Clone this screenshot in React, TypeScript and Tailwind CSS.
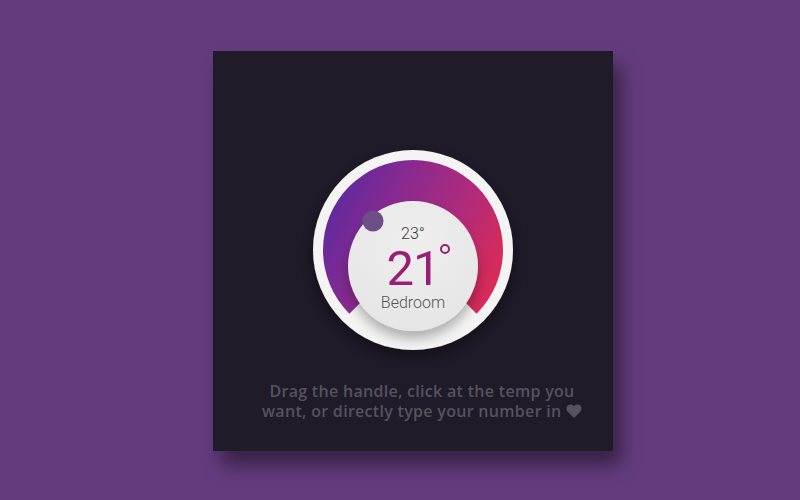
import React from "react";

function Dial() {
  return (
    <svg width="200" height="200" viewBox="0 0 200 200" className="absolute inset-0 overflow-visible">
      <defs>
        <linearGradient id="arcGrad" x1="0" y1="0.3" x2="1" y2="0.7">
          <stop offset="0%" stopColor="#5c2a9e" />
          <stop offset="35%" stopColor="#8b2a8e" />
          <stop offset="65%" stopColor="#ad2a7e" />
          <stop offset="100%" stopColor="#da2b56" />
        </linearGradient>
        <radialGradient id="innerGrad" cx="0.5" cy="0.3" r="0.7">
          <stop offset="0%" stopColor="#eeeeee" />
          <stop offset="100%" stopColor="#e6e6e6" />
        </radialGradient>
        <filter id="outerShadow" x="-30%" y="-30%" width="160%" height="160%">
          <feDropShadow dx="0" dy="6" stdDeviation="8" floodColor="#000" floodOpacity="0.45" />
        </filter>
        <filter id="innerShadow" x="-30%" y="-30%" width="160%" height="160%">
          <feDropShadow dx="0" dy="8" stdDeviation="6" floodColor="#000" floodOpacity="0.28" />
        </filter>
      </defs>
      <circle cx="100" cy="100" r="100" fill="#f4f4f4" filter="url(#outerShadow)" />
      <path
        d="M100,100 L36.36,163.64 A90,90 0 1,1 163.64,163.64 Z"
        fill="url(#arcGrad)"
      />
      <circle cx="100" cy="116" r="65" fill="url(#innerGrad)" filter="url(#innerShadow)" />
      <circle cx="60" cy="71" r="10.5" fill="#6d4e86" />
    </svg>
  );
}

export default function App() {
  return (
    <div className="w-[800px] h-[500px] bg-[#643c7e] pt-[51px] pl-[213px] overflow-hidden">
      <div className="w-[400px] h-[400px] bg-[#1f1b29] shadow-[8px_14px_18px_rgba(0,0,0,0.45)] flex flex-col items-center pt-[99px]">
        <div className="relative w-[200px] h-[200px]">
          <Dial />
          <div className="absolute left-0 right-0 top-[75px] flex flex-col items-center" style={{ fontFamily: "Roboto, 'Noto Sans', sans-serif" }}>
            <div className="text-[16px] leading-[18px] font-light text-[#3c3c3c]">23°</div>
            <div className="relative text-[49px] leading-[44px] font-normal text-[#9a1e74] mt-[4px] tracking-[-1px]">
              21
              <span className="absolute right-[-10px] top-[-3px] w-[10px] h-[10px] rounded-full border-2 border-[#9a1e74]" />
            </div>
            <div className="text-[16px] leading-[18px] font-light text-[#555555] mt-[3px]">Bedroom</div>
          </div>
        </div>
        <p
          className="mt-[31px] ml-[18px] text-center text-[16px] leading-[20px] font-semibold tracking-[0.3px] text-[#58525f] whitespace-nowrap"
          style={{ fontFamily: "'Open Sans', Lato, sans-serif" }}
        >
          Drag the handle, click at the temp you
          <br />
          want, or directly type your number in{" "}
          <svg width="16" height="14" viewBox="0 0 24 21" className="inline-block align-[-1px]">
            <path
              d="M12 21 L2.6 11.6 C-0.4 8.6 0.2 3.6 3.6 1.6 C6.6 -0.2 10 0.8 12 3.4 C14 0.8 17.4 -0.2 20.4 1.6 C23.8 3.6 24.4 8.6 21.4 11.6 Z"
              fill="#58525f"
            />
          </svg>
        </p>
      </div>
    </div>
  );
}
